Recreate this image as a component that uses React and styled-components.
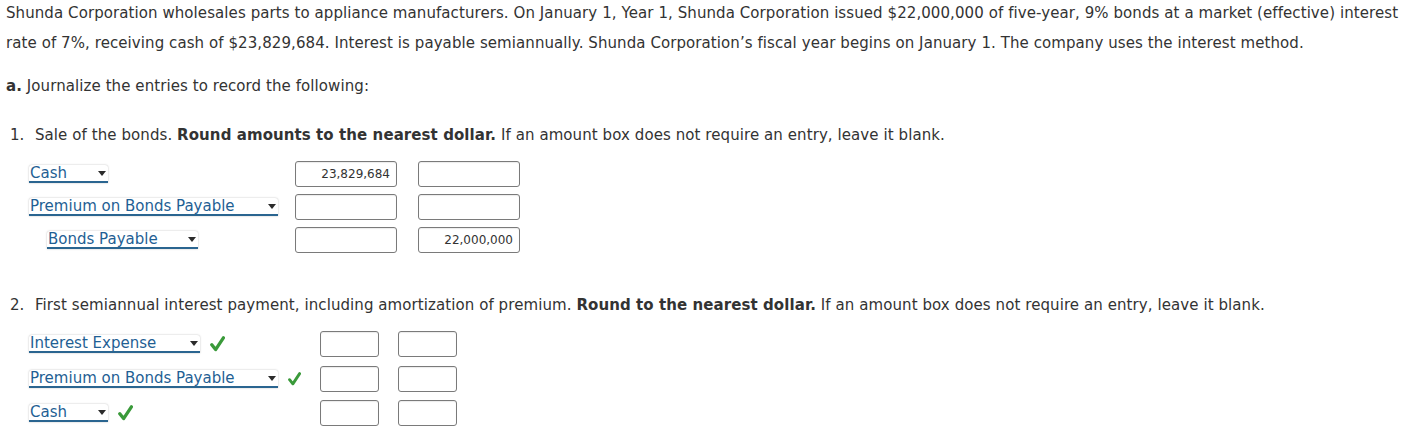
import * as React from 'react';
import styled, {createGlobalStyle} from 'styled-components';

const GlobalStyle = createGlobalStyle`
  body {
    margin: 0;
    background: #fff;
    font-family: "DejaVu Sans", Verdana, sans-serif;
    font-size: 15px;
    letter-spacing: 0.08px;
    color: #333;
  }
`;

const Page = styled.div`
  display: flex;
  flex-direction: column;
  padding: 0 4px 0 6px;
`;

const Intro = styled.p`
  margin: -2px 0 0;
  line-height: 30px;
`;

const PartHeading = styled.p`
  margin: 13px 0 0;
  line-height: 30px;

  & b {
    font-weight: bold;
  }
`;

const Step = styled.div`
  display: flex;
  margin-top: ${({top}) => top}px;
  padding-left: 4px;
  line-height: 20px;

  & b {
    font-weight: bold;
  }
`;

const StepNumber = styled.span`
  width: 25px;
  flex: none;
`;

const Entries = styled.div`
  display: grid;
  grid-template-columns: ${({labelWidth, boxWidth}) =>
    `${labelWidth}px ${boxWidth}px ${boxWidth}px`};
  column-gap: ${({boxGap}) => boxGap}px;
  row-gap: ${({rowGap}) => rowGap}px;
  margin-top: 16px;
  padding-left: 23px;
`;

const AccountCell = styled.div`
  display: flex;
  align-items: center;
  gap: 10px;
  height: 26px;
  padding-left: ${({indent}) => indent || 0}px;
`;

const AccountSelect = styled.div`
  position: relative;
  flex: none;
  box-sizing: border-box;
  width: ${({width}) => width}px;
  height: 18px;
  padding-left: 1px;
  font-size: 15px;
  letter-spacing: 0;
  line-height: 17px;
  color: #1f5f94;
  background: #fff;
  border-bottom: 2px solid #2a6590;
  border-radius: 3px 3px 0 0;
  box-shadow: 0 0 2px rgba(0, 0, 0, 0.28);
  white-space: nowrap;
`;

const Caret = styled.span`
  position: absolute;
  right: 2px;
  top: 6px;
  width: 0;
  height: 0;
  border-left: 4px solid transparent;
  border-right: 4px solid transparent;
  border-top: 5px solid #2b2b2b;
`;

const AmountBox = styled.div`
  box-sizing: border-box;
  height: 26px;
  padding: 0 6px;
  border: 1px solid #7a7a7a;
  border-radius: 3px;
  background: #fff;
  box-shadow: inset 0 1px 1px rgba(0, 0, 0, 0.08);
  font-size: 12px;
  letter-spacing: 0;
  line-height: 24px;
  text-align: right;
  color: #333;
`;

const Check = () => (
  <svg width="15" height="16" viewBox="0 0 15 16" aria-hidden="true">
    <polyline
      points="1.8,8.8 5.6,13.6 13.4,1.8"
      fill="none"
      stroke="#3a9a3a"
      strokeWidth="3.3"
      strokeLinecap="round"
      strokeLinejoin="round"
    />
  </svg>
);

const saleRows = [
  {account: 'Cash', width: 79, debit: '23,829,684', credit: ''},
  {account: 'Premium on Bonds Payable', width: 249, debit: '', credit: ''},
  {account: 'Bonds Payable', width: 151, indent: 18, debit: '', credit: '22,000,000'},
];

const interestRows = [
  {account: 'Interest Expense', width: 171},
  {account: 'Premium on Bonds Payable', width: 249},
  {account: 'Cash', width: 79},
];

const EntryRow = ({row, checked}) => (
  <>
    <AccountCell indent={row.indent}>
      <AccountSelect width={row.width}>
        {row.account}
        <Caret />
      </AccountSelect>
      {checked && <Check />}
    </AccountCell>
    <AmountBox>{row.debit}</AmountBox>
    <AmountBox>{row.credit}</AmountBox>
  </>
);

const App = () => {
  return (
    <Page>
      <GlobalStyle />
      <Intro>
        Shunda Corporation wholesales parts to appliance manufacturers. On
        January 1, Year 1, Shunda Corporation issued $22,000,000 of five-year,
        9% bonds at a market (effective) interest rate of 7%, receiving cash of
        $23,829,684. Interest is payable semiannually. Shunda Corporation’s
        fiscal year begins on January 1. The company uses the interest method.
      </Intro>
      <PartHeading>
        <b>a.</b> Journalize the entries to record the following:
      </PartHeading>

      <Step top={24}>
        <StepNumber>1.</StepNumber>
        <span>
          Sale of the bonds. <b>Round amounts to the nearest dollar.</b> If an
          amount box does not require an entry, leave it blank.
        </span>
      </Step>
      <Entries labelWidth={245} boxWidth={102} boxGap={21} rowGap={7}>
        {saleRows.map((row) => (
          <EntryRow key={row.account} row={row} />
        ))}
      </Entries>

      <Step top={42}>
        <StepNumber>2.</StepNumber>
        <span>
          First semiannual interest payment, including amortization of premium.{' '}
          <b>Round to the nearest dollar.</b> If an amount box does not require
          an entry, leave it blank.
        </span>
      </Step>
      <Entries labelWidth={272} boxWidth={59} boxGap={19} rowGap={8.5}>
        {interestRows.map((row) => (
          <EntryRow key={row.account} row={row} checked />
        ))}
      </Entries>
    </Page>
  );
};

export default App;
